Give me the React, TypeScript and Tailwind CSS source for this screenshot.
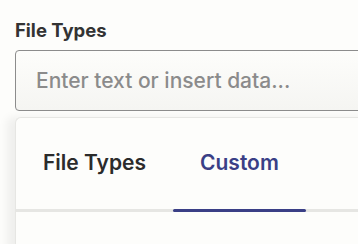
export default function App() {
  return (
    <div
      className="h-[244px] w-[358px] overflow-hidden bg-[#fdfdfb] pl-[15px] pt-[19px]"
      style={{ fontFamily: "Inter, 'Liberation Sans', sans-serif" }}
    >
      <label className="block text-[18.5px] leading-[23px] font-bold text-[#333333]">File Types</label>
      <div className="mt-[8px] flex h-[61px] w-[360px] items-center rounded-[4px] border border-[#8c8c8c] bg-gradient-to-b from-[#fdfdfb] to-[#f5f5f2] pl-[20px]">
        <span className="text-[21px] font-medium text-[#8b8b8b]">Enter text or insert data...</span>
      </div>
      <div className="mt-[6px] w-[360px] rounded-tl-[6px] border-t border-l border-[#e6e6e3] bg-[#fdfdfb] shadow-[-8px_0_10px_rgba(0,0,0,0.06)]">
        <div className="relative flex h-[94px] items-center">
          <div className="flex h-full items-center px-[27px] pb-[4px] text-[21px] font-semibold text-[#2b2b2b]">File Types</div>
          <div className="relative flex h-full items-center px-[27px] pb-[4px] text-[21px] font-semibold text-[#3a3f86]">
            Custom
            <span className="absolute right-0 bottom-0 left-0 z-10 h-[3px] rounded-full bg-[#3a3f86]" />
          </div>
          <span className="absolute right-0 bottom-0 left-0 h-[3px] bg-[#e6e6e3]" />
        </div>
        <div className="h-[40px]" />
      </div>
    </div>
  );
}
